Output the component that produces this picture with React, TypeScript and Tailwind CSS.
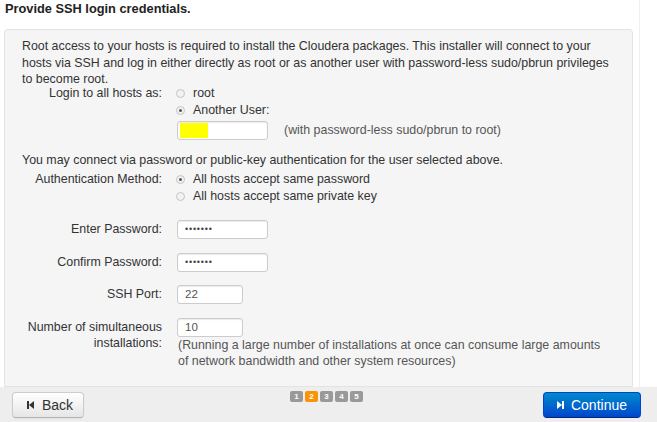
import React from "react";

function Radio({ checked, label }: { checked?: boolean; label: string }) {
  return (
    <div className="flex items-center h-[17px]">
      <span className="w-[9px] h-[9px] rounded-full border border-[#c4c4c4] bg-[#f2f2f2] flex items-center justify-center shrink-0">
        {checked && <span className="w-[3px] h-[3px] rounded-full bg-[#555]" />}
      </span>
      <span className="ml-[8px]">{label}</span>
    </div>
  );
}

function Field({ w, children }: { w: string; children?: React.ReactNode }) {
  return (
    <div
      className={`${w} h-[19px] bg-white border border-[#ccc] rounded-[3px] shadow-[inset_0_1px_1px_rgba(0,0,0,0.08)] flex items-center px-[7px] text-[11.5px] text-[#555] shrink-0`}
    >
      {children}
    </div>
  );
}

function Dots() {
  return <span className="text-[9px] tracking-[0.8px] text-[#444] leading-none">•••••••</span>;
}

export default function App() {
  return (
    <div className="w-[657px] h-[422px] bg-white flex flex-col overflow-hidden font-['Liberation_Sans',Arial,sans-serif] text-[#333]">
      <div className="w-[640px] flex-1 flex flex-col pl-[4px] pr-[6px] border-r border-[#efefef] min-h-0">
        <h1 className="text-[12.8px] font-bold leading-[15px] pt-[1px] pl-[1px] text-[#222]">
          Provide SSH login credentials.
        </h1>
        <div className="mt-[13px] flex-1 bg-[#f5f5f5] border border-[#e3e3e3] rounded-t-[4px] px-[17px] pt-[8px] text-[12.4px] leading-[16px]">
          <p className="leading-[16.5px]">
            Root access to your hosts is required to install the Cloudera packages. This installer will connect to your
            hosts via SSH and log in either directly as root or as another user with password-less sudo/pbrun privileges
            to become root.
          </p>
          <div className="flex -mt-[3px]">
            <div className="w-[140px] text-right h-[17px] leading-[17px]">Login to all hosts as:</div>
            <div className="ml-[14px] flex flex-col">
              <Radio label="root" />
              <Radio checked label="Another User:" />
              <div className="flex items-center mt-[2px] ml-[1px]">
                <Field w="w-[91px]">
                  <span className="w-[28px] h-[15px] bg-[#ffff00] -ml-[5px]" />
                </Field>
                <span className="ml-[16px] text-[#555]">(with password-less sudo/pbrun to root)</span>
              </div>
            </div>
          </div>
          <p className="mt-[12px] h-[16px] leading-[16px]">
            You may connect via password or public-key authentication for the user selected above.
          </p>
          <div className="flex mt-[3px]">
            <div className="w-[140px] text-right h-[17px] leading-[17px]">Authentication Method:</div>
            <div className="ml-[14px] flex flex-col">
              <Radio checked label="All hosts accept same password" />
              <Radio label="All hosts accept same private key" />
            </div>
          </div>
          <div className="flex items-center mt-[15px]">
            <div className="w-[140px] text-right">Enter Password:</div>
            <div className="ml-[15px]">
              <Field w="w-[91px]">
                <Dots />
              </Field>
            </div>
          </div>
          <div className="flex items-center mt-[14px]">
            <div className="w-[140px] text-right">Confirm Password:</div>
            <div className="ml-[15px]">
              <Field w="w-[91px]">
                <Dots />
              </Field>
            </div>
          </div>
          <div className="flex items-center mt-[13px]">
            <div className="w-[140px] text-right">SSH Port:</div>
            <div className="ml-[15px]">
              <Field w="w-[66px]">22</Field>
            </div>
          </div>
          <div className="flex mt-[14px]">
            <div className="w-[140px] text-right leading-[16px] pt-[1px]">
              Number of simultaneous
              <br />
              installations:
            </div>
            <div className="ml-[15px] flex flex-col">
              <Field w="w-[66px]">10</Field>
              <p className="leading-[16.5px] text-[#555] pl-[1px]">
                (Running a large number of installations at once can consume large amounts
                <br />
                of network bandwidth and other system resources)
              </p>
            </div>
          </div>
        </div>
      </div>
      <footer className="h-[35px] shrink-0 bg-[#eeeeee] grid grid-cols-[1fr_auto_1fr] items-start pl-[12px] pr-[16px] pt-[5px]">
        <div className="flex">
          <button className="w-[72px] h-[26px] rounded-[4px] border border-[#ccc] border-b-[#b3b3b3] bg-gradient-to-b from-white to-[#e6e6e6] shadow-[0_1px_2px_rgba(0,0,0,0.05)] flex items-center pl-[14px] text-[14px] text-[#333]">
            <svg width="7" height="8" viewBox="0 0 7 8" className="mr-[8px]">
              <rect x="0" y="0" width="2" height="8" fill="#333" />
              <polygon points="7,0 2,4 7,8" fill="#333" />
            </svg>
            Back
          </button>
        </div>
        <div className="flex gap-[2px] mt-[-1px]">
          {["1", "2", "3", "4", "5"].map((n) => (
            <span
              key={n}
              className={`w-[13px] h-[11px] rounded-[2px] flex items-center justify-center text-[8px] font-bold text-white leading-none ${
                n === "2" ? "bg-[#f89406]" : "bg-[#999999]"
              }`}
            >
              {n}
            </span>
          ))}
        </div>
        <div className="flex justify-end">
          <button className="w-[98px] h-[26px] rounded-[4px] border border-[#0044cc] border-b-[#002a80] bg-gradient-to-b from-[#0088cc] to-[#0044cc] flex items-center justify-center text-[14px] text-white">
            <svg width="7" height="8" viewBox="0 0 7 8" className="mr-[7px]">
              <polygon points="0,0 5,4 0,8" fill="#fff" />
              <rect x="5" y="0" width="2" height="8" fill="#fff" />
            </svg>
            Continue
          </button>
        </div>
      </footer>
    </div>
  );
}
